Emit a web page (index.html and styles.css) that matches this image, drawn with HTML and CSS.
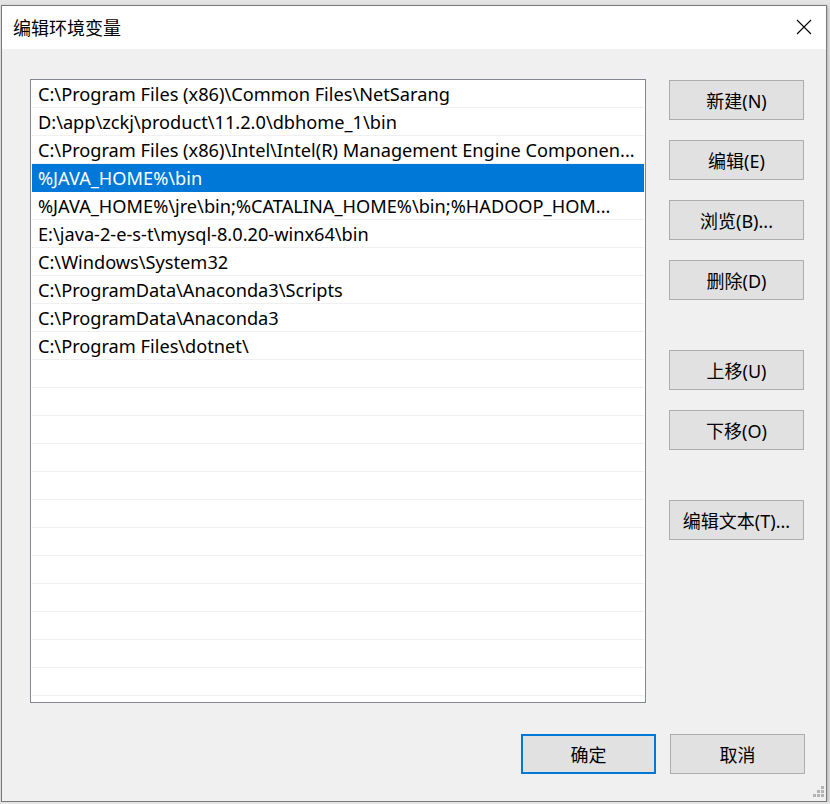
FILE: index.html
```html
<!DOCTYPE html>
<html lang="zh-CN">
<head>
  <meta charset="UTF-8" />
  <meta name="viewport" content="width=device-width, initial-scale=1.0"/>
  <title>编辑环境变量</title>
  <link rel="stylesheet" href="styles.css">
</head>
<body>
  <div class="dialog">
    <div class="titlebar">
      <div class="title">编辑环境变量</div>
      <button class="close" aria-label="关闭">
        <svg width="16" height="16" viewBox="0 0 16 16">
          <path d="M1 1 L15 15 M15 1 L1 15" stroke="#000" stroke-width="1.1" fill="none"/>
        </svg>
      </button>
    </div>

    <div class="content">
      <div class="main">
        <ul class="list">
          <li>C:\Program Files (x86)\Common Files\NetSarang</li>
          <li>D:\app\zckj\product\11.2.0\dbhome_1\bin</li>
          <li>C:\Program Files (x86)\Intel\Intel(R) Management Engine Componen...</li>
          <li class="selected">%JAVA_HOME%\bin</li>
          <li>%JAVA_HOME%\jre\bin;%CATALINA_HOME%\bin;%HADOOP_HOM...</li>
          <li>E:\java-2-e-s-t\mysql-8.0.20-winx64\bin</li>
          <li>C:\Windows\System32</li>
          <li>C:\ProgramData\Anaconda3\Scripts</li>
          <li>C:\ProgramData\Anaconda3</li>
          <li>C:\Program Files\dotnet\</li>
          <li></li><li></li><li></li><li></li><li></li><li></li>
          <li></li><li></li><li></li><li></li><li></li><li></li><li></li>
        </ul>

        <div class="actions">
          <div class="group">
            <button class="btn">新建(N)</button>
            <button class="btn">编辑(E)</button>
            <button class="btn">浏览(B)...</button>
            <button class="btn">删除(D)</button>
          </div>
          <div class="group">
            <button class="btn">上移(U)</button>
            <button class="btn">下移(O)</button>
          </div>
          <div class="group">
            <button class="btn">编辑文本(T)...</button>
          </div>
        </div>
      </div>

      <div class="footer">
        <button class="btn default">确定</button>
        <button class="btn">取消</button>
      </div>
    </div>

    <svg class="grip" width="12" height="12" viewBox="0 0 12 12">
      <g fill="#b4b4b4">
        <rect x="8" y="0" width="3" height="3"/>
        <rect x="4" y="4" width="3" height="3"/>
        <rect x="8" y="4" width="3" height="3"/>
        <rect x="0" y="8" width="3" height="3"/>
        <rect x="4" y="8" width="3" height="3"/>
        <rect x="8" y="8" width="3" height="3"/>
      </g>
    </svg>
  </div>
</body>
</html>
```

FILE: styles.css
```css
body {
  margin: 0;
  background-color: #e4e4e4;
  font-family: "Noto Sans", "Noto Sans CJK SC", sans-serif;
  color: #000;
}
.dialog {
  position: relative;
  box-sizing: border-box;
  width: 826px;
  height: 797px;
  margin: 5px 0 0 1px;
  background-color: #f0f0f0;
  border: 1px solid #7a7a7a;
  box-shadow: 1px 1px 3px rgba(0,0,0,0.25);
}
.titlebar {
  display: flex;
  align-items: center;
  justify-content: space-between;
  height: 43px;
  padding: 0 14px 0 11px;
  background-color: #fff;
}
.title {
  font-family: "Noto Sans CJK SC", sans-serif;
  font-size: 18px;
  margin-top: -1px;
}
.close {
  display: flex;
  padding: 0;
  border: none;
  background: none;
  margin-top: -2px;
}
.content {
  padding: 30px 21px 0 28px;
}
.main {
  display: flex;
  gap: 23px;
}
.list {
  list-style: none;
  margin: 0;
  padding: 0 1px;
  width: 616px;
  height: 624px;
  box-sizing: border-box;
  overflow: hidden;
  background-color: #fff;
  border: 1px solid #828790;
}
.list li {
  box-sizing: border-box;
  height: 28px;
  padding: 1px 2px 0 6px;
  line-height: 27px;
  font-size: 18.2px;
  white-space: nowrap;
  overflow: hidden;
  text-overflow: ellipsis;
  border-bottom: 1px solid #f0f0f0;
}
.list li.selected {
  background-color: #0078d7;
  color: #fff;
  border-bottom-color: #0078d7;
}
.actions {
  display: flex;
  flex-direction: column;
  gap: 50px;
  padding-top: 1px;
}
.group {
  display: flex;
  flex-direction: column;
  gap: 20px;
}
.btn {
  box-sizing: border-box;
  width: 135px;
  height: 40px;
  padding: 0;
  font-family: "Noto Sans", "Noto Sans CJK SC", sans-serif;
  font-size: 18px;
  color: #000;
  background-color: #e1e1e1;
  border: 1px solid #adadad;
}
.btn.default {
  border: 2px solid #0078d7;
}
.footer {
  display: flex;
  justify-content: flex-end;
  gap: 14px;
  margin-top: 31px;
}
.grip {
  position: absolute;
  right: 1px;
  bottom: 3px;
}
```
